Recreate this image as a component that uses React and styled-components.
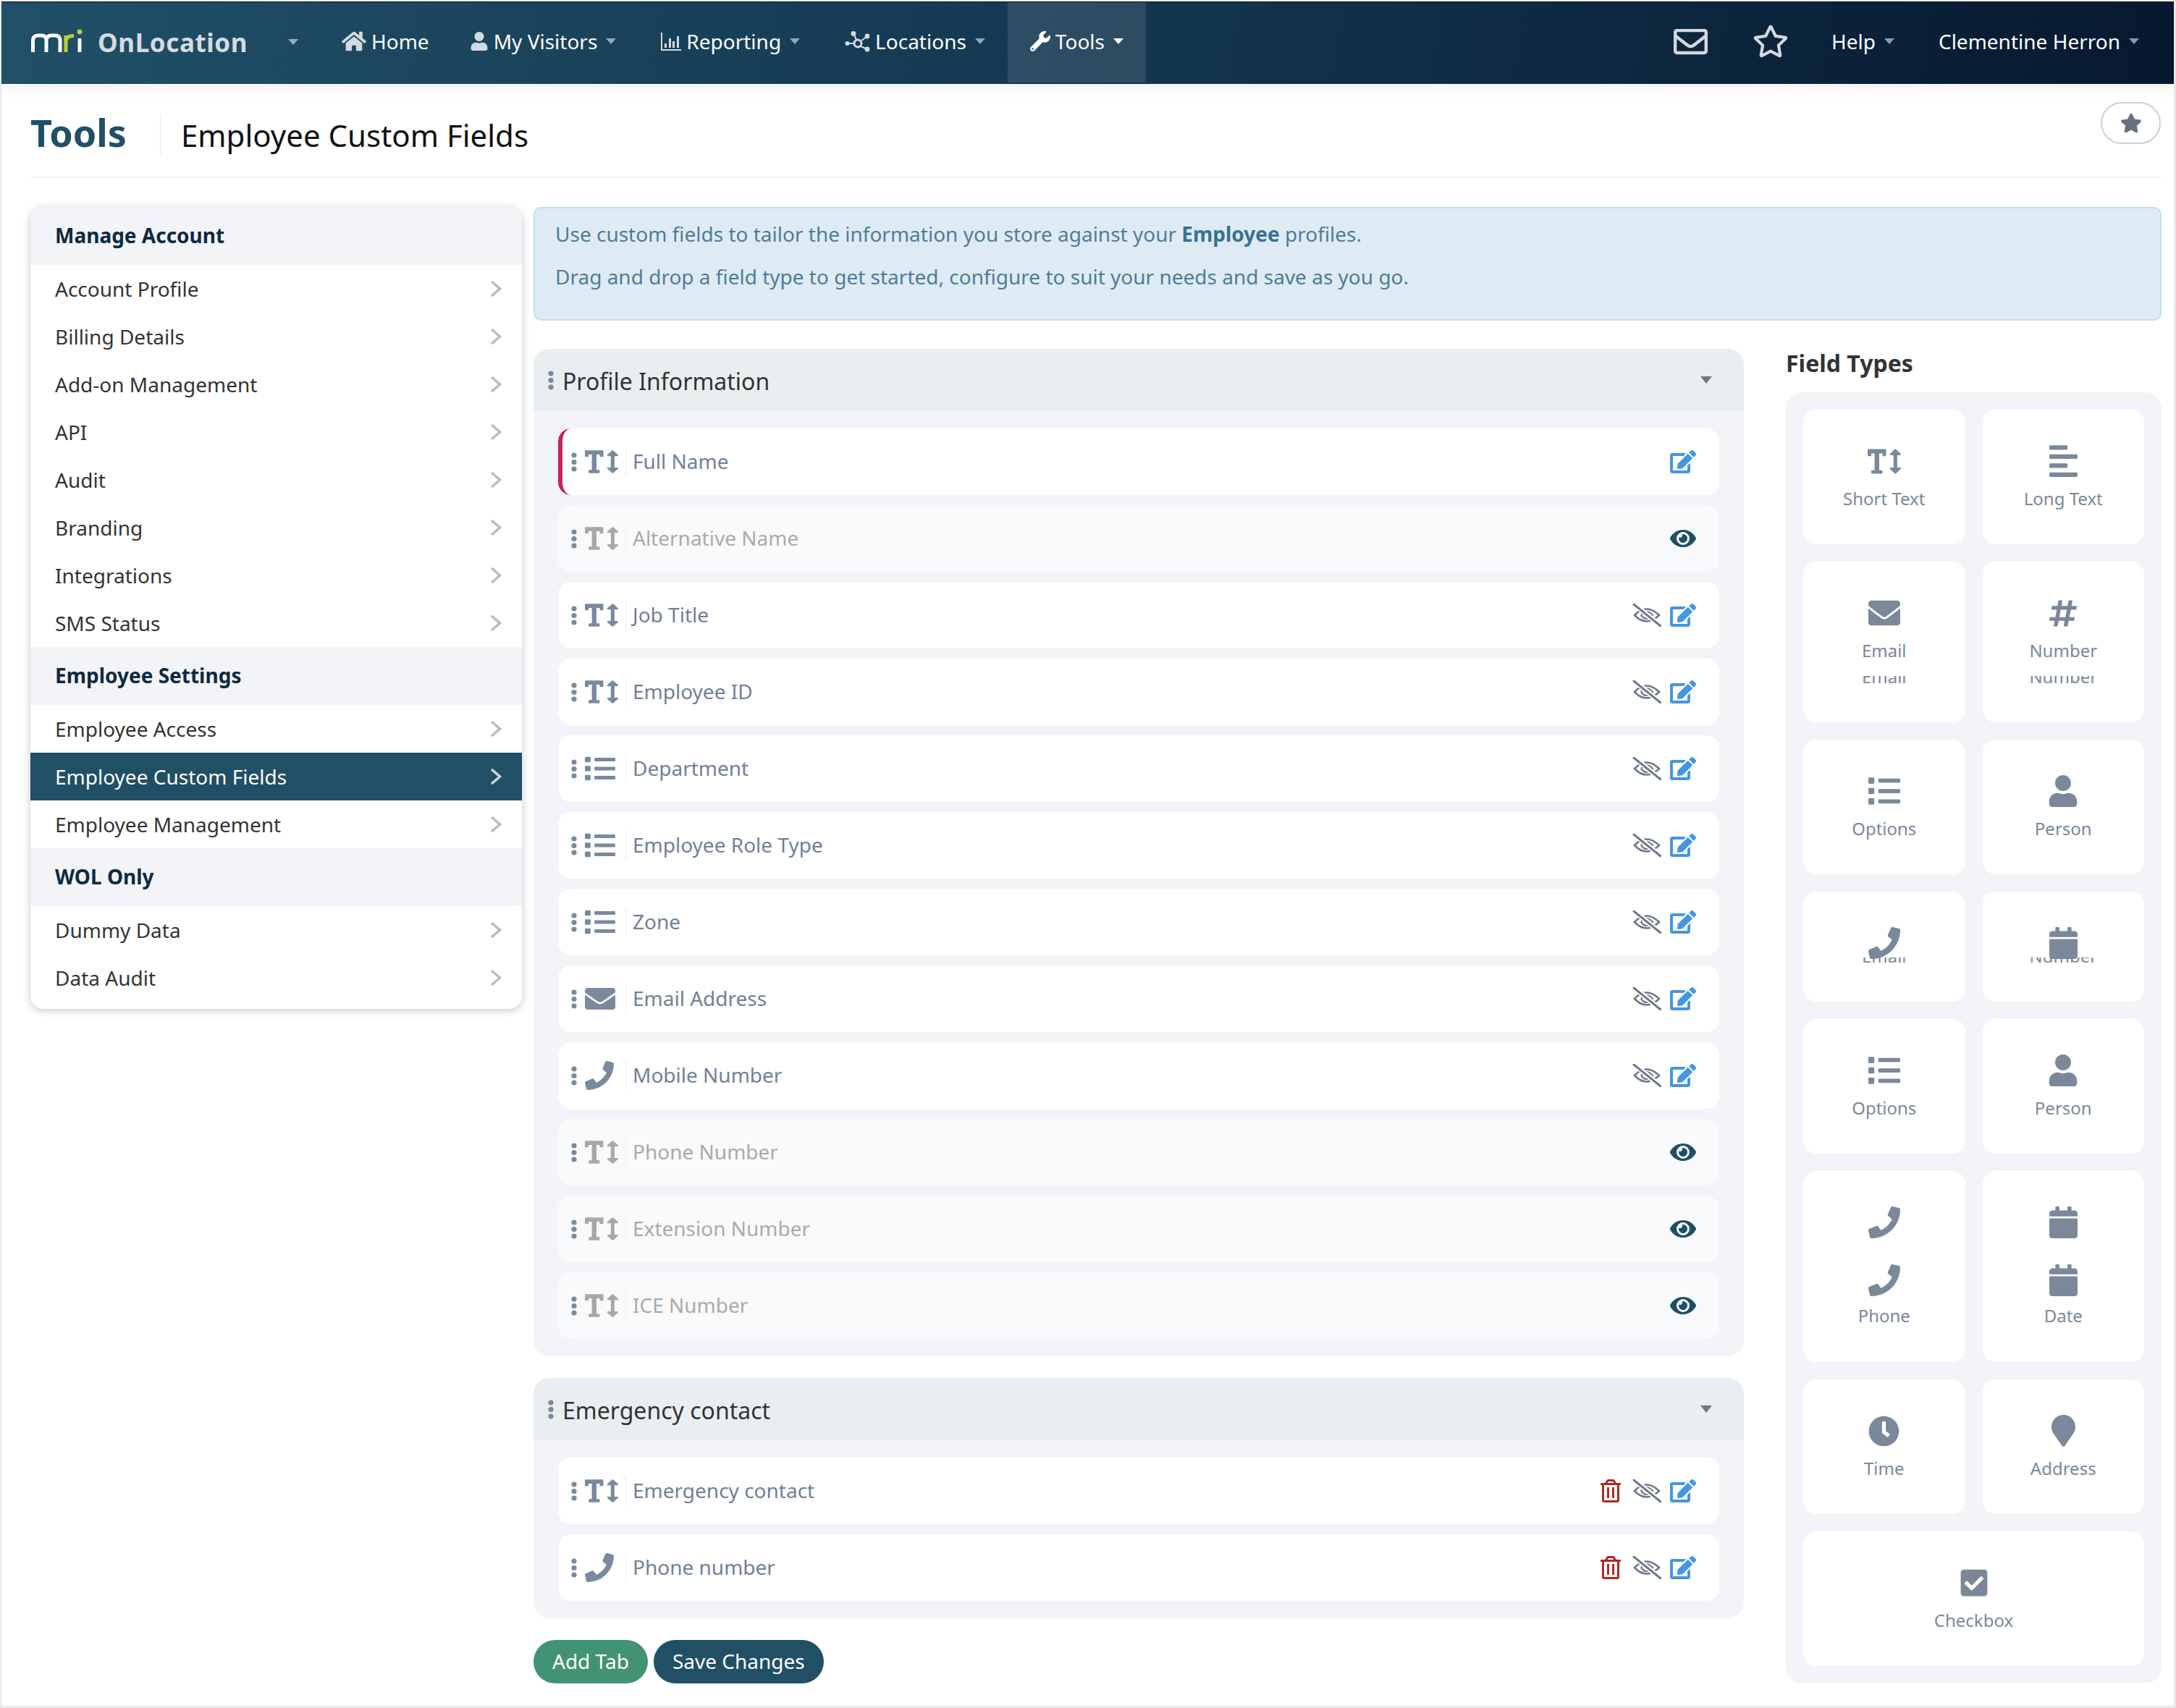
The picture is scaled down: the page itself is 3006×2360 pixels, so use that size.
import styled, { createGlobalStyle } from 'styled-components';
import {
  FaHome, FaUser, FaWrench, FaRegEnvelope, FaRegStar, FaStar, FaTextHeight, FaList, FaEnvelope,
  FaPhone, FaAlignLeft, FaHashtag, FaCalendar, FaClock, FaMapMarker, FaCheckSquare,
  FaEdit, FaEye, FaRegTrashAlt,
} from 'react-icons/fa';

const GlobalStyle = createGlobalStyle`
  html, body {
    margin: 0;
    padding: 0;
    background: #fff;
  }
  * {
    box-sizing: border-box;
  }
  body {
    font-family: "Noto Sans", "Open Sans", sans-serif;
    font-size: 28px;
    color: #333;
  }
`;

const menu = [
  { title: 'Manage Account', items: ['Account Profile', 'Billing Details', 'Add-on Management', 'API', 'Audit', 'Branding', 'Integrations', 'SMS Status'] },
  { title: 'Employee Settings', items: ['Employee Access', 'Employee Custom Fields', 'Employee Management'] },
  { title: 'WOL Only', items: ['Dummy Data', 'Data Audit'] },
];

const profileFields = [
  { name: 'Full Name', type: 'text', required: true, actions: ['edit'] },
  { name: 'Alternative Name', type: 'text', off: true, actions: ['show'] },
  { name: 'Job Title', type: 'text', actions: ['hide', 'edit'] },
  { name: 'Employee ID', type: 'text', actions: ['hide', 'edit'] },
  { name: 'Department', type: 'list', actions: ['hide', 'edit'] },
  { name: 'Employee Role Type', type: 'list', actions: ['hide', 'edit'] },
  { name: 'Zone', type: 'list', actions: ['hide', 'edit'] },
  { name: 'Email Address', type: 'mail', actions: ['hide', 'edit'] },
  { name: 'Mobile Number', type: 'phone', actions: ['hide', 'edit'] },
  { name: 'Phone Number', type: 'text', off: true, actions: ['show'] },
  { name: 'Extension Number', type: 'text', off: true, actions: ['show'] },
  { name: 'ICE Number', type: 'text', off: true, actions: ['show'] },
];

const emergencyFields = [
  { name: 'Emergency contact', type: 'text', actions: ['trash', 'hide', 'edit'] },
  { name: 'Phone number', type: 'phone', actions: ['trash', 'hide', 'edit'] },
];

function MriLogo() {
  return (
    <LogoSvg viewBox="0 0 72 36" width="72" height="36">
      <path d="M3.5 32 V16 Q3.5 9 11 9 H15 Q22 9 22 16 V32 M22 16 Q22 9 29 9 H34 Q41 9 41 16 V32" fill="none" stroke="#fff" strokeWidth="5" />
      <path d="M49 32 V9" stroke="#b9d13c" strokeWidth="5" />
      <path d="M49 17 Q49 9.5 60 9.5" fill="none" stroke="#b9d13c" strokeWidth="5" />
      <path d="M68 13 V32" stroke="#fff" strokeWidth="5" />
      <circle cx="68" cy="4" r="3.4" fill="#b9d13c" />
    </LogoSvg>
  );
}

function ReportingIcon() {
  return (
    <svg width="28" height="25" viewBox="0 0 28 25" fill="#d3d9e0">
      <rect x="0" y="0" width="2" height="25" />
      <rect x="0" y="23" width="28" height="2" />
      <rect x="5" y="15" width="3" height="6" />
      <rect x="11" y="8" width="3" height="13" />
      <rect x="16" y="12" width="3" height="9" />
      <rect x="22" y="5" width="3" height="16" />
    </svg>
  );
}

function LocationsIcon() {
  return (
    <svg width="35" height="29" viewBox="0 0 35 29" fill="none" stroke="#d3d9e0" strokeWidth="2">
      <path d="M12 3 L16 12 M4 17 H12 M22 21 L31 25 M23 13 L30 8" />
      <circle cx="18" cy="17" r="5" strokeWidth="3" />
      <circle cx="12" cy="3.5" r="3.4" fill="#d3d9e0" stroke="none" />
      <circle cx="3.5" cy="17" r="3" fill="#d3d9e0" stroke="none" />
      <circle cx="31" cy="7" r="3.4" fill="#d3d9e0" stroke="none" />
      <circle cx="31" cy="25" r="3.4" fill="#d3d9e0" stroke="none" />
    </svg>
  );
}

function Dots() {
  return (
    <svg width="8" height="27" viewBox="0 0 8 27" fill="#7a8a9e">
      <circle cx="4" cy="4" r="3.6" />
      <circle cx="4" cy="13.5" r="3.6" />
      <circle cx="4" cy="23" r="3.6" />
    </svg>
  );
}

function Chevron({ active }) {
  return (
    <svg width="16" height="24" viewBox="0 0 16 24" fill="none" stroke={active ? '#c9d4da' : '#bcbcbc'} strokeWidth="3.6">
      <path d="M2 2 L13.5 12 L2 22" />
    </svg>
  );
}

function EyeSlash() {
  return (
    <svg width="40" height="32" viewBox="0 0 40 32" fill="none" stroke="#6d7889" strokeWidth="2.6">
      <path d="M3 16 Q19 -1 37 16 Q19 33 3 16 Z" />
      <path d="M12 16 Q19 6 28 16 Q19 26 12 16" strokeWidth="2.2" />
      <path d="M2 0 L40 32" stroke="#fff" strokeWidth="7" />
      <path d="M2 1 L39 31" strokeWidth="3" strokeLinecap="round" />
    </svg>
  );
}

function FieldIcon({ type, off }) {
  const color = off ? '#a8a8a8' : '#7a8a9e';
  if (type === 'list') return <FaList color={color} style={{ width: 42, height: 40 }} preserveAspectRatio="none" />;
  if (type === 'mail') return <FaEnvelope color={color} style={{ width: 42, height: 40 }} preserveAspectRatio="none" />;
  if (type === 'phone') return <FaPhone color={color} size={40} />;
  return <FaTextHeight color={color} style={{ width: 46, height: 36 }} preserveAspectRatio="none" />;
}

function Action({ kind }) {
  if (kind === 'edit') return <ActionIcon><FaEdit color="#4496e0" size={36} /></ActionIcon>;
  if (kind === 'show') return <ActionIcon><FaEye color="#1f4e66" size={36} /></ActionIcon>;
  if (kind === 'hide') return <EyeSlash />;
  return <ActionIcon $trash><FaRegTrashAlt color="#a92b26" size={32} /></ActionIcon>;
}

function FieldRow({ field }) {
  return (
    <Row $off={field.off} $required={field.required}>
      <Dots />
      <RowIcon><FieldIcon type={field.type} off={field.off} /></RowIcon>
      <RowDivider />
      <RowName $off={field.off}>{field.name}</RowName>
      <RowActions>
        {field.actions.map(a => <Action key={a} kind={a} />)}
      </RowActions>
    </Row>
  );
}

function Section({ title, fields }) {
  return (
    <SectionBox>
      <SectionHead>
        <Dots />
        <SectionTitle>{title}</SectionTitle>
        <HeadCaret />
      </SectionHead>
      <SectionBody>
        {fields.map(f => <FieldRow key={f.name} field={f} />)}
      </SectionBody>
    </SectionBox>
  );
}

function TypeCard({ icon, label, ghost, overlap, wide, second }) {
  return (
    <Card $wide={wide}>
      <CardIcon>{icon}</CardIcon>
      {second && <CardIcon $second>{second}</CardIcon>}
      {label && <CardLabel $tight={!!second}>{label}</CardLabel>}
      {ghost && <Ghost $overlap={overlap}><GhostText $overlap={overlap}>{ghost}</GhostText></Ghost>}
    </Card>
  );
}

const C = '#7a8899';

export default function App() {
  const shortText = <FaTextHeight color={C} style={{ width: 46, height: 39 }} preserveAspectRatio="none" />;
  const longText = <FaAlignLeft color={C} style={{ width: 39, height: 50 }} preserveAspectRatio="none" />;
  const mail = <FaEnvelope color={C} style={{ width: 44, height: 46 }} preserveAspectRatio="none" />;
  const hash = <FaHashtag color={C} style={{ width: 38, height: 41 }} preserveAspectRatio="none" />;
  const options = <FaList color={C} style={{ width: 44, height: 46 }} preserveAspectRatio="none" />;
  const person = <FaUser color={C} size={44} />;
  const phone = <FaPhone color={C} size={44} />;
  const calendar = <FaCalendar color={C} style={{ width: 39, height: 44 }} preserveAspectRatio="none" />;

  return (
    <Page>
      <GlobalStyle />
      <Nav>
        <Brand>
          <MriLogo />
          <BrandName>OnLocation</BrandName>
          <Caret />
        </Brand>
        <NavItem $end="25px"><FaHome size={34} color="#d3d9e0" /><span>Home</span></NavItem>
        <NavItem><FaUser size={26} color="#d3d9e0" /><span>My Visitors</span><Caret /></NavItem>
        <NavItem><ReportingIcon /><span>Reporting</span><Caret /></NavItem>
        <NavItem><LocationsIcon /><span>Locations</span><Caret /></NavItem>
        <NavItem $active><FaWrench size={28} color="#fff" /><span>Tools</span><Caret $active /></NavItem>
        <NavRight>
          <NavIcon $gap="62px"><FaRegEnvelope size={47} color="#d3d9e0" /></NavIcon>
          <NavIcon $gap="56px"><FaRegStar size={50} color="#d3d9e0" /></NavIcon>
          <NavText $gap="58px"><span>Help</span><Caret /></NavText>
          <NavText><span>Clementine Herron</span><Caret /></NavText>
        </NavRight>
      </Nav>

      <Content>
        <TitleBar>
          <AppTitle>Tools</AppTitle>
          <TitleDivider />
          <PageTitle>Employee Custom Fields</PageTitle>
          <StarPill><FaStar size={30} color="#657080" /></StarPill>
        </TitleBar>

        <Columns>
          <Sidebar>
            {menu.map(group => (
              <div key={group.title}>
                <MenuHead>{group.title}</MenuHead>
                {group.items.map(item => (
                  <MenuItem key={item} $active={item === 'Employee Custom Fields'}>
                    {item}
                    <Chevron active={item === 'Employee Custom Fields'} />
                  </MenuItem>
                ))}
              </div>
            ))}
          </Sidebar>

          <Main>
            <Alert>
              <AlertLine>Use custom fields to tailor the information you store against your <strong>Employee</strong> profiles.</AlertLine>
              <AlertLine>Drag and drop a field type to get started, configure to suit your needs and save as you go.</AlertLine>
            </Alert>
            <Builder>
              <Sections>
                <Section title="Profile Information" fields={profileFields} />
                <Section title="Emergency contact" fields={emergencyFields} />
                <Buttons>
                  <Button $green>Add Tab</Button>
                  <Button>Save Changes</Button>
                </Buttons>
              </Sections>
              <Types>
                <TypesTitle>Field Types</TypesTitle>
                <TypesPanel>
                  <TypeCard icon={shortText} label="Short Text" />
                  <TypeCard icon={longText} label="Long Text" />
                  <TypeCard icon={mail} label="Email" ghost="Email" />
                  <TypeCard icon={hash} label="Number" ghost="Number" />
                  <TypeCard icon={options} label="Options" />
                  <TypeCard icon={person} label="Person" />
                  <TypeCard icon={phone} ghost="Email" overlap />
                  <TypeCard icon={calendar} ghost="Number" overlap />
                  <TypeCard icon={options} label="Options" />
                  <TypeCard icon={person} label="Person" />
                  <TypeCard icon={phone} second={phone} label="Phone" />
                  <TypeCard icon={calendar} second={calendar} label="Date" />
                  <TypeCard icon={<FaClock color={C} size={43} />} label="Time" />
                  <TypeCard icon={<FaMapMarker color={C} style={{ width: 33, height: 44 }} />} label="Address" />
                  <TypeCard icon={<FaCheckSquare color={C} size={42} />} label="Checkbox" wide />
                </TypesPanel>
              </Types>
            </Builder>
          </Main>
        </Columns>
      </Content>
    </Page>
  );
}

const Page = styled.div`
  width: 3006px;
  height: 2360px;
  padding-top: 2px;
  border-left: 2px solid #e6e8eb;
  border-right: 3px solid #e6e8eb;
  border-bottom: 3px solid #e6e8eb;
  background: #fff;
  overflow: hidden;
`;

const Nav = styled.nav`
  display: flex;
  align-items: stretch;
  height: 114px;
  margin: 0 -3px 0 -2px;
  padding-left: 2px;
  background: linear-gradient(100deg, #205068 0%, #143750 50%, #06182f 100%);
  border-top: 1px solid #04111f;
  color: #fff;
  box-shadow: 0 4px 22px rgba(0, 0, 0, 0.07);
`;

const Brand = styled.div`
  display: flex;
  align-items: center;
  width: 439px;
  padding-left: 40px;
  padding-bottom: 3px;
`;

const LogoSvg = styled.svg`
  flex: none;
  margin-right: 21px;
`;

const BrandName = styled.span`
  font-size: 35px;
  font-weight: 700;
  letter-spacing: 0.6px;
  color: #d5dbe2;
  margin-right: 56px;
`;

const Caret = styled.i`
  display: block;
  flex: none;
  width: 0;
  height: 0;
  border-left: 7.5px solid transparent;
  border-right: 7.5px solid transparent;
  border-top: 8px solid ${p => (p.$active ? '#fff' : 'rgba(255, 255, 255, 0.55)')};
`;

const NavItem = styled.div`
  display: flex;
  align-items: center;
  gap: 7px;
  height: 111px;
  padding: 0 ${p => p.$end || '31px'} 3px 31px;
  font-size: 28px;
  background: ${p => (p.$active ? 'rgba(255, 255, 255, 0.11)' : 'transparent')};
  ${Caret} {
    margin-left: 5px;
  }
`;

const NavRight = styled.div`
  display: flex;
  align-items: center;
  margin-left: auto;
  padding: 0 51px 5px 0;
`;

const NavIcon = styled.span`
  display: flex;
  margin-right: ${p => p.$gap};
`;

const NavText = styled.div`
  display: flex;
  align-items: center;
  gap: 12px;
  margin-left: 3px;
  margin-right: ${p => p.$gap || '0'};
  font-size: 28px;
`;

const Content = styled.div`
  padding: 0 17px 0 40px;
`;

const TitleBar = styled.header`
  display: flex;
  align-items: center;
  height: 130px;
  border-bottom: 2px solid #f0f2f3;
`;

const AppTitle = styled.h1`
  margin: 5px 0 0;
  font-size: 52px;
  font-weight: 700;
  color: #214f66;
`;

const TitleDivider = styled.span`
  width: 1px;
  height: 55px;
  margin: 12px 28px 0 46px;
  background: #e8eaec;
`;

const PageTitle = styled.h2`
  margin: 12px 0 0;
  font-size: 42px;
  font-weight: 400;
  color: #111;
`;

const StarPill = styled.button`
  display: flex;
  align-items: center;
  justify-content: center;
  width: 83px;
  height: 58px;
  margin: 0 1px 20px auto;
  padding: 0;
  background: #fff;
  border: 2px solid #c5d3d8;
  border-radius: 29px;
`;

const Columns = styled.div`
  display: flex;
  align-items: flex-start;
  gap: 16px;
  margin-top: 40px;
`;

const Sidebar = styled.aside`
  flex: none;
  width: 679px;
  padding-bottom: 10px;
  background: #fff;
  border-radius: 18px;
  overflow: hidden;
  box-shadow: 0 2px 12px rgba(0, 0, 0, 0.22);
`;

const MenuHead = styled.div`
  display: flex;
  align-items: center;
  height: 80px;
  padding: 0 0 2px 34px;
  background: #f3f4f8;
  font-size: 28px;
  font-weight: 700;
  color: #0f2a40;
`;

const MenuItem = styled.div`
  display: flex;
  align-items: center;
  justify-content: space-between;
  height: 66px;
  padding: 0 28px 0 34px;
  font-size: 28px;
  color: ${p => (p.$active ? '#fff' : '#333')};
  background: ${p => (p.$active ? '#214f66' : '#fff')};
`;

const Main = styled.main`
  flex: 1;
  min-width: 0;
`;

const Alert = styled.div`
  height: 157px;
  padding: 14px 28px 0;
  background: #deebf5;
  border: 2px solid #c0e2ec;
  border-radius: 10px;
  color: #4f7d98;
`;

const AlertLine = styled.p`
  margin: 0 0 17px;
  font-size: 28px;
  line-height: 42px;
  strong {
    color: #3b7090;
  }
`;

const Builder = styled.div`
  display: flex;
  align-items: flex-start;
  gap: 58px;
  margin-top: 39px;
`;

const Sections = styled.div`
  display: flex;
  flex-direction: column;
  gap: 30px;
  flex: none;
  width: 1672px;
`;

const SectionBox = styled.section`
  background: #f3f4f8;
  border-radius: 22px;
  overflow: hidden;
`;

const SectionHead = styled.div`
  display: flex;
  align-items: center;
  gap: 12px;
  height: 86px;
  padding: 0 44px 0 20px;
  background: #e9eff1;
`;

const SectionTitle = styled.span`
  flex: 1;
  padding-top: 2px;
  font-size: 32px;
  color: #333;
`;

const HeadCaret = styled.i`
  display: block;
  width: 0;
  height: 0;
  border-left: 8.5px solid transparent;
  border-right: 8.5px solid transparent;
  border-top: 10px solid #777;
`;

const SectionBody = styled.div`
  display: flex;
  flex-direction: column;
  gap: 14px;
  padding: 24px 34px;
`;

const Row = styled.div`
  display: flex;
  align-items: center;
  height: 92px;
  padding: 0 32px 0 ${p => (p.$required ? '12px' : '18px')};
  background: ${p => (p.$off ? '#f9fafc' : '#fff')};
  border-left: ${p => (p.$required ? '6px solid #c2255c' : 'none')};
  border-radius: 18px;
`;

const RowIcon = styled.span`
  display: flex;
  align-items: center;
  width: 46px;
  margin-left: 11px;
`;

const RowDivider = styled.span`
  width: 1px;
  height: 40px;
  margin: 0 9px 0 10px;
  background: #e8ebef;
`;

const RowName = styled.span`
  flex: 1;
  padding-bottom: 2px;
  font-size: 28px;
  color: ${p => (p.$off ? '#aaa' : '#718096')};
`;

const RowActions = styled.div`
  display: flex;
  align-items: center;
  gap: 12px;
`;

const ActionIcon = styled.span`
  display: flex;
  margin-right: ${p => (p.$trash ? '2px' : '0')};
`;

const Buttons = styled.div`
  display: flex;
  gap: 8px;
`;

const Button = styled.button`
  height: 60px;
  padding: 0 26px 2px;
  font-family: inherit;
  font-size: 28px;
  color: #fff;
  background: ${p => (p.$green ? '#429373' : '#214f66')};
  border: 0;
  border-radius: 30px;
`;

const Types = styled.div`
  flex: 1;
  min-width: 0;
`;

const TypesTitle = styled.h3`
  display: flex;
  align-items: center;
  height: 60px;
  margin: -10px 0 10px;
  padding-bottom: 2px;
  font-size: 32px;
  font-weight: 700;
  color: #333;
`;

const TypesPanel = styled.div`
  display: grid;
  grid-template-columns: 1fr 1fr;
  grid-template-rows: 186px 222px 186px 152px 186px 264px 186px 186px;
  gap: 24px;
  height: 1784px;
  padding: 24px;
  background: #f3f4f8;
  border-radius: 22px;
`;

const Card = styled.div`
  ${p => p.$wide && 'grid-column: 1 / 3;'}
  display: flex;
  flex-direction: column;
  align-items: center;
  padding-top: 49px;
  background: #fff;
  border-radius: 18px;
  overflow: hidden;
`;

const CardIcon = styled.span`
  position: relative;
  z-index: 1;
  display: flex;
  align-items: center;
  justify-content: center;
  height: 44px;
  margin-top: ${p => (p.$second ? '36px' : '0')};
`;

const CardLabel = styled.span`
  font-size: 24px;
  line-height: 36px;
  margin-top: ${p => (p.$tight ? '9px' : '12px')};
  color: #7a8899;
`;

const Ghost = styled.div`
  height: ${p => (p.$overlap ? '7px' : '10px')};
  margin-top: ${p => (p.$overlap ? '-2px' : '17px')};
  overflow: hidden;
`;

const GhostText = styled.div`
  font-size: 24px;
  line-height: 24px;
  margin-top: ${p => (p.$overlap ? '-14px' : '-11px')};
  color: #7a8899;
`;
